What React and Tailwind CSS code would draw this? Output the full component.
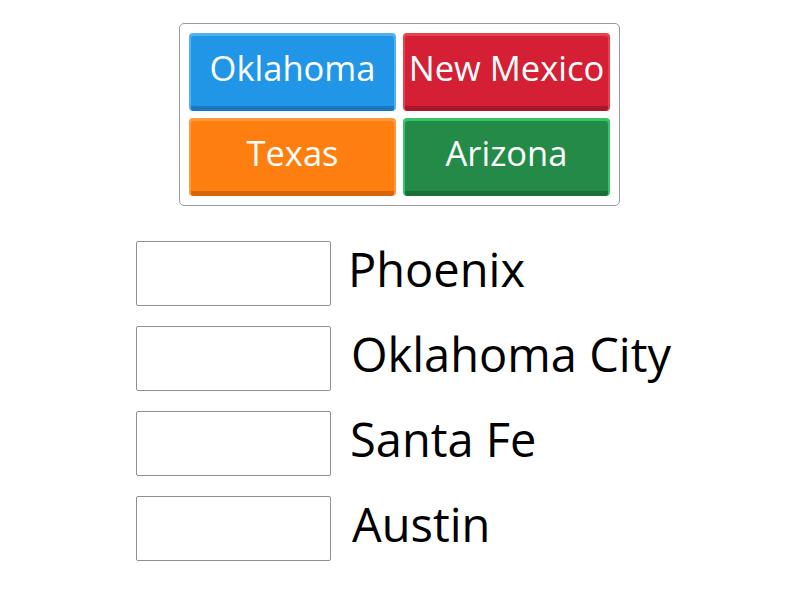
const tiles = [
  { label: "Oklahoma", outer: "bg-[#4fb1f1]", inner: "bg-[#2196e6]", bottom: "bg-[#1877c0]" },
  { label: "New Mexico", outer: "bg-[#e8404f]", inner: "bg-[#d41f34]", bottom: "bg-[#a8182a]" },
  { label: "Texas", outer: "bg-[#ff9a3a]", inner: "bg-[#ff7e10]", bottom: "bg-[#d8650a]" },
  { label: "Arizona", outer: "bg-[#35c565]", inner: "bg-[#238b47]", bottom: "bg-[#1b6e38]" },
];

const cities = [
  { name: "Phoenix", pad: "pl-[17px]" },
  { name: "Oklahoma City", pad: "pl-[20px]" },
  { name: "Santa Fe", pad: "pl-[19px]" },
  { name: "Austin", pad: "pl-[21px]" },
];

const font = { fontFamily: "'Open Sans', 'Noto Sans', sans-serif" };

function Tile({ t }) {
  return (
    <div className={`relative h-[78px] w-[207px] rounded-[4px] ${t.outer} p-[2px] pt-[3px] pb-0 overflow-hidden`}>
      <div className={`flex h-full flex-col overflow-hidden rounded-[3px] ${t.inner}`}>
        <div className="flex flex-1 items-center justify-center pb-[5px] text-[34.5px] leading-none text-white" style={font}>
          {t.label}
        </div>
        <div className={`h-[5px] ${t.bottom}`} />
      </div>
    </div>
  );
}

export default function App() {
  return (
    <div className="min-h-[600px] w-[800px] bg-white" style={font}>
      <div className="flex justify-center pt-[23px]">
        <div className="ml-[-1px] grid grid-cols-2 gap-x-[7px] gap-y-[7px] rounded-[5px] border border-[#9a9a9a] p-[9px]">
          {tiles.map((t) => (
            <Tile key={t.label} t={t} />
          ))}
        </div>
      </div>
      <div className="flex flex-col gap-[20px] pl-[136px] pt-[35px]">
        {cities.map((c) => (
          <div key={c.name} className="flex items-center">
            <div className="h-[65px] w-[195px] rounded-[2px] border border-[#8f8f8f] bg-white" />
            <div className={`${c.pad} pb-[8px] text-[47px] leading-none text-black`}>{c.name}</div>
          </div>
        ))}
      </div>
    </div>
  );
}
